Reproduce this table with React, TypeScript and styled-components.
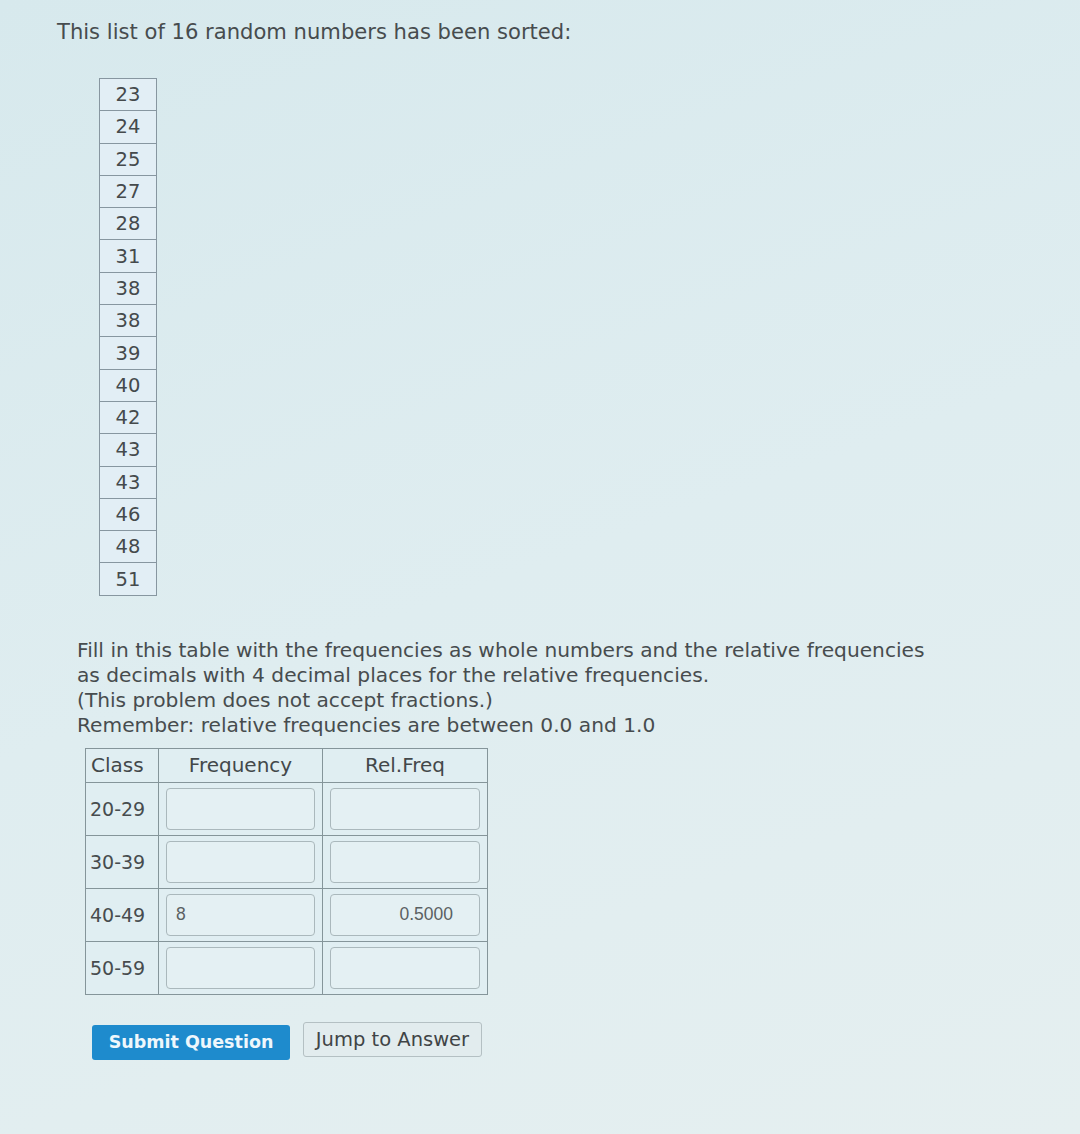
import React from "react";
import styled, { createGlobalStyle } from "styled-components";

const GlobalStyle = createGlobalStyle`
  html, body {
    margin: 0;
    padding: 0;
    background: linear-gradient(160deg, #d7e9ed 0%, #dfedf0 50%, #e5eff0 100%);
    min-height: 100%;
  }
  body {
    font-family: "DejaVu Sans", "Open Sans", sans-serif;
    color: #474c4e;
  }
`;

const Page = styled.div`
  width: 1080px;
  height: 1134px;
  box-sizing: border-box;
  padding: 16px 0 0 57px;
  display: flex;
  flex-direction: column;
  align-items: flex-start;
`;

const Title = styled.p`
  margin: 0;
  font-size: 21.1px;
  line-height: 32px;
`;

const NumList = styled.table`
  margin: 30px 0 0 42px;
  border-collapse: collapse;
  width: 58px;
`;

const NumCell = styled.td`
  border: 1.5px solid #8796a0;
  background: #e2eef5;
  height: 31.3px;
  padding: 0;
  text-align: center;
  font-size: 19.5px;
  color: #454a4c;
`;

const Instructions = styled.div`
  margin: 42px 0 0 20px;
  font-size: 20.2px;
  line-height: 25px;
`;

const FreqTable = styled.table`
  margin: 10px 0 0 28px;
  border-collapse: collapse;
  table-layout: fixed;
  width: 402px;
  background: #e0eef2;
`;

const Col = styled.col<{ $w: number }>`
  width: ${(p) => p.$w}px;
`;

const HeadCell = styled.th<{ $align?: string }>`
  border: 1.5px solid #85959a;
  height: 33px;
  padding: 0 5px;
  font-weight: normal;
  font-size: 20px;
  text-align: ${(p) => p.$align || "center"};
  color: #43484a;
`;

const ClassCell = styled.td`
  border: 1.5px solid #85959a;
  height: 52px;
  padding: 0 3px 0 4px;
  font-size: 19px;
  color: #474c4e;
`;

const InputCell = styled.td`
  border: 1.5px solid #85959a;
  padding: 0 7px;
`;

const Field = styled.div<{ $right?: boolean }>`
  height: 42px;
  box-sizing: border-box;
  border: 1.5px solid #aab8bc;
  border-radius: 4px;
  background: #e4f0f3;
  display: flex;
  align-items: center;
  justify-content: ${(p) => (p.$right ? "flex-end" : "flex-start")};
  padding: 0 26px 0 9px;
  font-family: "Liberation Sans", Arial, sans-serif;
  font-size: 17.5px;
  color: #5a6062;
`;

const Buttons = styled.div`
  margin: 30px 0 0 35px;
  display: flex;
  align-items: center;
  gap: 13px;
`;

const SubmitButton = styled.button`
  height: 35px;
  width: 198px;
  border: none;
  border-radius: 3px;
  background: #1e8bcd;
  color: #eef7fc;
  font-family: "DejaVu Sans", sans-serif;
  font-weight: bold;
  font-size: 17.5px;
  padding: 0;
`;

const JumpButton = styled.button`
  height: 35px;
  width: 179px;
  margin-top: -5px;
  border: 1.5px solid #b4c0c3;
  border-radius: 3px;
  background: #e2ecee;
  color: #3f4446;
  font-family: "DejaVu Sans", sans-serif;
  font-size: 19.5px;
  padding: 0;
`;

const numbers = [23, 24, 25, 27, 28, 31, 38, 38, 39, 40, 42, 43, 43, 46, 48, 51];

const rows: { cls: string; freq: string; rel: string }[] = [
  { cls: "20-29", freq: "", rel: "" },
  { cls: "30-39", freq: "", rel: "" },
  { cls: "40-49", freq: "8", rel: "0.5000" },
  { cls: "50-59", freq: "", rel: "" },
];

export default function App() {
  return (
    <>
      <GlobalStyle />
      <Page>
        <Title>This list of 16 random numbers has been sorted:</Title>
        <NumList>
          <tbody>
            {numbers.map((n, i) => (
              <tr key={i}>
                <NumCell>{n}</NumCell>
              </tr>
            ))}
          </tbody>
        </NumList>
        <Instructions>
          Fill in this table with the frequencies as whole numbers and the relative frequencies
          <br />
          as decimals with 4 decimal places for the relative frequencies.
          <br />
          (This problem does not accept fractions.)
          <br />
          Remember: relative frequencies are between 0.0 and 1.0
        </Instructions>
        <FreqTable>
          <colgroup>
            <Col $w={73} />
            <Col $w={164} />
            <Col $w={165} />
          </colgroup>
          <thead>
            <tr>
              <HeadCell $align="left">Class</HeadCell>
              <HeadCell>Frequency</HeadCell>
              <HeadCell>Rel.Freq</HeadCell>
            </tr>
          </thead>
          <tbody>
            {rows.map((r) => (
              <tr key={r.cls}>
                <ClassCell>{r.cls}</ClassCell>
                <InputCell>
                  <Field>{r.freq}</Field>
                </InputCell>
                <InputCell>
                  <Field $right>{r.rel}</Field>
                </InputCell>
              </tr>
            ))}
          </tbody>
        </FreqTable>
        <Buttons>
          <SubmitButton>Submit Question</SubmitButton>
          <JumpButton>Jump to Answer</JumpButton>
        </Buttons>
      </Page>
    </>
  );
}
